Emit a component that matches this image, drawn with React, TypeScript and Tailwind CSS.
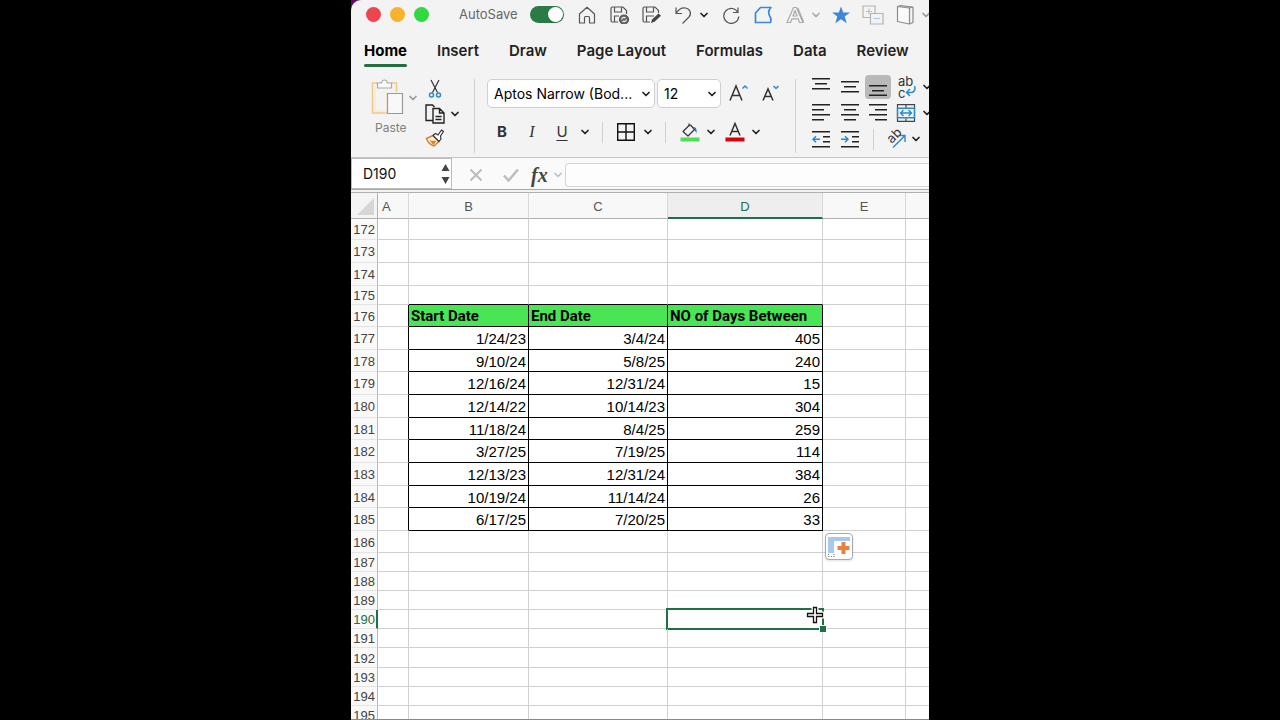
import React from "react";
import clsx from "clsx";

const tabs = ["Home", "Insert", "Draw", "Page Layout", "Formulas", "Data", "Review"];

type Row = { n: number; h: string; cells?: [string, string, string] };

const rows: Row[] = [
  { n: 172, h: "h-[21px]" },
  { n: 173, h: "h-[23px]" },
  { n: 174, h: "h-[23px]" },
  { n: 175, h: "h-[19px]" },
  { n: 176, h: "h-[22px]", cells: ["Start Date", "End Date", "NO of Days Between"] },
  { n: 177, h: "h-[23px]", cells: ["1/24/23", "3/4/24", "405"] },
  { n: 178, h: "h-[22px]", cells: ["9/10/24", "5/8/25", "240"] },
  { n: 179, h: "h-[23px]", cells: ["12/16/24", "12/31/24", "15"] },
  { n: 180, h: "h-[23px]", cells: ["12/14/22", "10/14/23", "304"] },
  { n: 181, h: "h-[22px]", cells: ["11/18/24", "8/4/25", "259"] },
  { n: 182, h: "h-[23px]", cells: ["3/27/25", "7/19/25", "114"] },
  { n: 183, h: "h-[23px]", cells: ["12/13/23", "12/31/24", "384"] },
  { n: 184, h: "h-[22px]", cells: ["10/19/24", "11/14/24", "26"] },
  { n: 185, h: "h-[23px]", cells: ["6/17/25", "7/20/25", "33"] },
  { n: 186, h: "h-[22px]" },
  { n: 187, h: "h-[19px]" },
  { n: 188, h: "h-[19px]" },
  { n: 189, h: "h-[19px]" },
  { n: 190, h: "h-[19px]" },
  { n: 191, h: "h-[19px]" },
  { n: 192, h: "h-[20px]" },
  { n: 193, h: "h-[19px]" },
  { n: 194, h: "h-[19px]" },
  { n: 195, h: "h-[19px]" },
];

const HEADER_ROW = 176;
const SELECTED_ROW = 190;

type IconProps = {
  w?: number;
  h?: number;
  className?: string;
  children: React.ReactNode;
};

const Icon = ({ w = 18, h = 18, className, children }: IconProps) => (
  <svg
    width={w}
    height={h}
    viewBox={`0 0 ${w} ${h}`}
    fill="none"
    stroke="currentColor"
    strokeWidth="1.2"
    className={clsx("shrink-0", className)}
    aria-hidden="true"
  >
    {children}
  </svg>
);

const Chevron = ({ className = "text-[#222]" }: { className?: string }) => (
  <Icon w={8} h={8} className={className}>
    <path d="M1 2.5l3 3 3-3" strokeWidth="1.7" strokeLinecap="round" strokeLinejoin="round" />
  </Icon>
);

const IconButton = ({
  label,
  className,
  children,
}: {
  label: string;
  className?: string;
  children: React.ReactNode;
}) => (
  <button aria-label={label} className={clsx("flex shrink-0 items-center justify-center", className)}>
    {children}
  </button>
);

const Lines = ({ d }: { d: string }) => (
  <Icon w={18} h={18} className="text-[#222]">
    <path d={d} strokeWidth="1.4" />
  </Icon>
);

const TitleBar = () => (
  <div className="flex h-[29px] items-center pl-[15px] text-[#555]">
    <div className="flex shrink-0 gap-[9px]">
      <button aria-label="Close" className="size-[15px] rounded-full bg-[#ee4550]" />
      <button aria-label="Minimize" className="size-[15px] rounded-full bg-[#f7b32e]" />
      <button aria-label="Zoom" className="size-[15px] rounded-full bg-[#30d940]" />
    </div>
    <label htmlFor="autosave" className="ml-[30px] w-[71px] shrink-0 text-[13px] text-[#666]">
      AutoSave
    </label>
    <span className="relative flex h-[17px] w-[34px] shrink-0 items-center rounded-full bg-[#2a7b45]">
      <input id="autosave" type="checkbox" defaultChecked className="peer absolute inset-0 opacity-0" />
      <span className="ml-[18px] size-[15px] rounded-full bg-white shadow-sm" />
    </span>

    <div className="ml-[14px] flex shrink-0 items-center gap-[14px]">
      <IconButton label="Home screen">
        <Icon>
          <path d="M1.5 8L9 1.3 16.5 8v9h-5v-5.5a1 1 0 0 0-1-1h-3a1 1 0 0 0-1 1V17h-5z" strokeLinejoin="round" />
        </Icon>
      </IconButton>
      <IconButton label="Save">
        <Icon w={20} className="-mr-0.5">
          <path d="M8 16H2.500a1.500 1.500 0 0 1-1.500-1.500v-12A1.500 1.500 0 0 1 2.500 1H13l3.500 3.500V8M4.500 1v5h7V1M4.500 16v-6H9" />
          <circle cx="14" cy="13.500" r="4.500" fill="#666" />
          <path d="M11.500 13.500a2.500 2.500 0 0 1 4-1.500m1 1.500a2.500 2.500 0 0 1-4 1.500" stroke="#f3f3f3" />
        </Icon>
      </IconButton>
      <IconButton label="Save as">
        <Icon w={20} className="-mr-0.5">
          <path d="M8 16H2.500a1.500 1.500 0 0 1-1.500-1.500v-12A1.500 1.500 0 0 1 2.500 1H13l3.500 3.500V7M4.500 1v5h7V1M4.500 16v-6H12" />
          <path d="M9 17l1-3.500L16.500 7.500l2.500 2.300-6.500 6z" fill="#444" stroke="none" />
        </Icon>
      </IconButton>
      <div className="flex items-center gap-2">
        <IconButton label="Undo">
          <Icon>
            <path d="M2 1.500v6h6M2 7.500C4.500 3.500 8 1.500 11.500 2c4.500.7 6.500 5.500 3.500 9L8.500 17.500" />
          </Icon>
        </IconButton>
        <IconButton label="Undo history">
          <Chevron />
        </IconButton>
      </div>
      <IconButton label="Redo">
        <Icon>
          <path d="M16 1.500v5h-5M16 6.500a7.500 7.500 0 1 0 .8 4" />
        </Icon>
      </IconButton>
      <IconButton label="Shapes" className="text-[#3c86dc]">
        <Icon>
          <path d="M6.500 1.500H17c-2.500 2.500-3 5-1.500 8 1.500 2.500 2 4.500 1 7H1.500V7z" strokeWidth="1.700" strokeLinejoin="round" />
        </Icon>
      </IconButton>
      <div className="flex items-center gap-2">
        <IconButton label="Text effects" className="text-[#aaa]">
          <Icon>
            <path d="M1 16.500L7.500 1.500h3L17 16.500h-3.500l-1.400-3.700H6L4.500 16.500zM7 10h4.200L9 4.500z" strokeLinejoin="round" />
            <path d="M11.500 2l6 14.500" strokeWidth="1.800" />
          </Icon>
        </IconButton>
        <IconButton label="More text effects">
          <Chevron className="text-[#aaa]" />
        </IconButton>
      </div>
      <IconButton label="Favorites" className="-ml-0.5 text-[#3c86dc]">
        <Icon>
          <path d="M9 .5l2.200 6H18l-5.300 4 2 6.700L9 13.200l-5.700 4 2-6.700L0 6.500h6.800z" fill="currentColor" stroke="none" />
        </Icon>
      </IconButton>
      <IconButton label="Group" className="-ml-0.5 text-[#b5b5b5]">
        <Icon w={22} h={20}>
          <path d="M8.500 12.500H1V1h12v7.500M8.500 8.500h12.500v10.500H8.500z" />
          <path d="M7 3.500v6M4 6.500h6M11.500 13.500h6.500" stroke="#a9c6e2" />
        </Icon>
      </IconButton>
      <div className="-ml-0.5 flex items-center gap-2">
        <IconButton label="Format" className="text-[#8c8c8c]">
          <Icon h={20}>
            <path d="M1.500 1.500l12 1.500v16l-12-2.500z" fill="#fafafa" strokeLinejoin="round" />
            <path d="M1.500 1.500l3-.8L17 2v15.500l-3.500 1.500M13.500 3L17 2" strokeLinejoin="round" />
          </Icon>
        </IconButton>
        <IconButton label="More formats">
          <Chevron className="text-[#999]" />
        </IconButton>
      </div>
    </div>
  </div>
);

const Tabs = () => (
  <nav className="flex h-[43px] gap-[30px] pt-[10px] pl-[13px] text-[15px] leading-[23px] font-semibold text-[#222]">
    {tabs.map((tab, i) => (
      <button
        key={tab}
        className={clsx(
          "flex h-[28px] shrink-0 flex-col justify-between whitespace-nowrap",
          i === 0 && "font-bold text-black"
        )}
      >
        {tab}
        {i === 0 && <span className="h-[3px] w-full rounded-full bg-[#1f6f3f]" />}
      </button>
    ))}
  </nav>
);

const ClipboardGroup = () => (
  <div className="flex h-[74px] shrink-0 border-r border-[#d0d0d0] pr-[15px]">
    <div className="w-[54px]">
      <div className="flex items-center gap-1">
        <IconButton label="Paste icon">
          <Icon w={34} h={38}>
            <path d="M7 4H1.500v30H16M20 4h5.500v9" stroke="#f0c88c" strokeWidth="1.500" />
            <path d="M4 7v25h12V13" stroke="#fbe6c6" />
            <path d="M6.500 9V4h4c.5-4 5.500-4 6 0h4v5z" fill="#fafafa" stroke="#aaa" />
            <path d="M16.500 14.500h15v20h-15z" fill="#f8f8f8" stroke="#999" />
          </Icon>
        </IconButton>
        <IconButton label="Paste options">
          <Chevron className="text-[#999]" />
        </IconButton>
      </div>
      <button className="ml-[4px] block text-[12px] leading-[22px] text-[#808080]">Paste</button>
    </div>
    <div className="flex flex-col gap-[5px]">
      <IconButton label="Cut" className="self-start">
        <Icon w={20} h={20} className="text-[#333]">
          <path d="M6 1l6.500 12.500M14 1L7.500 13.500" />
          <circle cx="6.500" cy="16" r="2" stroke="#2c8ac9" strokeWidth="1.500" />
          <circle cx="13.500" cy="16" r="2" stroke="#2c8ac9" strokeWidth="1.500" />
        </Icon>
      </IconButton>
      <div className="flex items-center gap-[6px]">
        <IconButton label="Copy">
          <Icon w={20} h={20} className="text-[#222]">
            <path d="M8 16.500H1V1h6.500l2 2M8 4.500h6.500l4.500 4.500v10H8zM14.500 4.500v4.500H19M10.500 12.500h6M10.500 15.500h6" strokeWidth="1.400" />
          </Icon>
        </IconButton>
        <IconButton label="Copy options">
          <Chevron />
        </IconButton>
      </div>
      <IconButton label="Format painter" className="self-start">
        <Icon w={20} h={18}>
          <path d="M1.500 9.500L8 6.500l6 6-5 4.500c-3.500-1-6-3.500-7.500-7.500z" fill="#fff4e6" stroke="#df7f2a" strokeWidth="1.500" />
          <path d="M4.500 11.500l7 .5-3 4z" fill="#df7f2a" stroke="none" />
          <path d="M8 6.500l2.500-2 2.500 1.500L16.500 1l2 1.500L15.500 7l.5 3-2 2.500z" fill="#fff" stroke="#333" strokeLinejoin="round" />
        </Icon>
      </IconButton>
    </div>
  </div>
);

const FontGroup = () => (
  <div className="flex h-[74px] shrink-0 flex-col border-r border-[#d0d0d0] pl-[12px]">
    <div className="flex items-center">
      <div className="relative">
        <select
          aria-label="Font"
          className="h-[29px] w-[168px] appearance-none rounded-[5px] border border-[#cfcfcf] bg-white pl-[6px] text-[14px] text-black"
        >
          <option>Aptos Narrow (Bod...</option>
        </select>
        <span className="pointer-events-none absolute top-[11px] right-[5px]">
          <Chevron />
        </span>
      </div>
      <div className="relative ml-[2px]">
        <select
          aria-label="Font size"
          className="h-[29px] w-[64px] appearance-none rounded-[5px] border border-[#cfcfcf] bg-white pl-[6px] text-[14px] text-black"
        >
          <option>12</option>
        </select>
        <span className="pointer-events-none absolute top-[11px] right-[5px]">
          <Chevron />
        </span>
      </div>
      <IconButton label="Increase font size" className="ml-[8px]">
        <Icon w={20} h={20} className="text-[#333]">
          <path d="M1 16.500L7 2l6 14.500M3 11.500h8" strokeWidth="1.500" />
          <path d="M13.500 4.500l2.500-2.500 2.500 2.500" stroke="#2c8ac9" strokeWidth="1.500" />
        </Icon>
      </IconButton>
      <IconButton label="Decrease font size" className="ml-[12px]">
        <Icon w={20} h={20} className="text-[#333]">
          <path d="M2 16.500L7 5l5 11.500M3.500 12.500h7" strokeWidth="1.500" />
          <path d="M12.500 2L15 4.500 17.500 2" stroke="#2c8ac9" strokeWidth="1.500" />
        </Icon>
      </IconButton>
    </div>
    <div className="mt-[12px] flex h-[24px] items-center text-[15px] text-[#333]">
      <button className="w-[30px] font-bold">B</button>
      <button className="w-[30px] text-[16px] italic [font-family:'Liberation_Serif',serif]">I</button>
      <button className="w-[30px] underline underline-offset-3">U</button>
      <IconButton label="Underline options" className="ml-[4px]">
        <Chevron />
      </IconButton>
      <span className="ml-[13px] h-[21px] w-px bg-[#d0d0d0]" />
      <IconButton label="Borders" className="ml-[14px]">
        <Icon className="text-[#111]">
          <path d="M.7.7h16.600v16.600H.7zM9 .7v16.600M.7 9h16.600" strokeWidth="1.400" />
        </Icon>
      </IconButton>
      <IconButton label="Border options" className="ml-[9px]">
        <Chevron />
      </IconButton>
      <span className="ml-[13px] h-[21px] w-px bg-[#d0d0d0]" />
      <IconButton label="Fill color" className="ml-[14px]">
        <Icon w={20} h={20} className="text-[#333]">
          <path d="M9 1.500v3M9 3.500L3 9.500l5 4.500 6.500-6.500-4-4.500z" strokeLinejoin="round" />
          <path d="M13 5c3 0 4 2 3.500 6.500C15.500 9 15 8.500 13.500 7.500z" fill="#2c6fa5" stroke="none" />
          <path d="M.5 15.500h19v4H.5z" fill="#4fdd53" stroke="none" />
        </Icon>
      </IconButton>
      <IconButton label="Fill options" className="ml-[7px]">
        <Chevron />
      </IconButton>
      <IconButton label="Font color" className="ml-[10px]">
        <Icon w={20} h={20} className="text-[#333]">
          <path d="M5 13.500L10 1.500l5 12M6.500 9.500h7" strokeWidth="1.500" />
          <path d="M.5 15.500h19v4H.5z" fill="#d8000c" stroke="none" />
        </Icon>
      </IconButton>
      <IconButton label="Font color options" className="ml-[7px]">
        <Chevron />
      </IconButton>
      <span className="w-[35px]" />
    </div>
  </div>
);

const AlignGroup = () => (
  <div className="-mt-[5px] flex shrink-0 flex-col pl-[12px]">
    <div className="flex h-[26px] items-center">
      <IconButton label="Top align" className="w-[26px]">
        <Lines d="M0 .7h18M3 5.700h12M0 10.700h18" />
      </IconButton>
      <IconButton label="Middle align" className="ml-[3px] w-[26px]">
        <Lines d="M0 3.700h18M3 8.700h12M0 13.700h18" />
      </IconButton>
      <IconButton label="Bottom align" className="ml-[2px] h-[24px] w-[26px] rounded-[4px] bg-[#b9b9b9]">
        <Lines d="M0 7.700h18M3 12.700h12M0 17.300h18" />
      </IconButton>
      <IconButton label="Wrap text" className="ml-[7px]">
        <span className="relative block h-[24px] w-[20px] text-left text-[13px] leading-[12px] text-[#333]">
          ab
          <br />c
          <span className="absolute right-[2px] bottom-[2px]">
            <Icon w={11} h={11} className="text-[#2c8ac9]">
              <path d="M9.500 0c1.500 4-1 6.500-3 6.500H1.500M5 3L1.500 6.500 5 10" strokeWidth="1.500" />
            </Icon>
          </span>
        </span>
      </IconButton>
      <IconButton label="Wrap options" className="ml-[5px]">
        <Chevron />
      </IconButton>
    </div>
    <div className="flex h-[26px] items-center">
      <IconButton label="Align left" className="w-[26px]">
        <Lines d="M0 .7h18M0 5.700h12M0 10.700h18M0 15.700h12" />
      </IconButton>
      <IconButton label="Align center" className="ml-[3px] w-[26px]">
        <Lines d="M0 .7h18M3 5.700h12M0 10.700h18M3 15.700h12" />
      </IconButton>
      <IconButton label="Align right" className="ml-[2px] w-[26px]">
        <Lines d="M0 .7h18M6 5.700h12M0 10.700h18M6 15.700h12" />
      </IconButton>
      <IconButton label="Merge" className="ml-[5px]">
        <Icon w={20} h={18} className="text-[#444]">
          <path d="M1.500.7h17v16.600h-17zM10 .7v3M10 14.300v3" />
          <path d="M1.500 4.200h17v9.600h-17zM4.500 9h11M7.500 6l-3 3 3 3M12.500 6l3 3-3 3" stroke="#2c8ac9" strokeWidth="1.400" />
        </Icon>
      </IconButton>
      <IconButton label="Merge options" className="ml-[7px]">
        <Chevron />
      </IconButton>
    </div>
    <div className="flex h-[26px] items-center">
      <IconButton label="Decrease indent" className="w-[26px]">
        <Icon className="text-[#222]">
          <path d="M0 1.700h18M11 6.700h7M11 11.700h7M0 16.700h18" strokeWidth="1.400" />
          <path d="M8 9.200H1M4 6.200l-3 3 3 3" stroke="#2c8ac9" strokeWidth="1.500" />
        </Icon>
      </IconButton>
      <IconButton label="Increase indent" className="ml-[3px] w-[26px]">
        <Icon className="text-[#222]">
          <path d="M0 1.700h18M11 6.700h7M11 11.700h7M0 16.700h18" strokeWidth="1.400" />
          <path d="M0 9.200h7M4 6.200l3 3-3 3" stroke="#2c8ac9" strokeWidth="1.500" />
        </Icon>
      </IconButton>
      <span className="ml-[10px] h-[21px] w-px bg-[#d0d0d0]" />
      <IconButton label="Orientation" className="ml-[12px]">
        <span className="relative block size-[20px]">
          <span className="absolute top-0 left-0 -rotate-45 text-[13px] leading-[12px] text-[#333]">ab</span>
          <Icon w={20} h={20} className="text-[#2c8ac9]">
            <path d="M7 18.500L18.500 7M12.500 6.500h6.500V13" strokeWidth="1.400" />
          </Icon>
        </span>
      </IconButton>
      <IconButton label="Orientation options" className="ml-[6px]">
        <Chevron />
      </IconButton>
    </div>
  </div>
);

const FormulaBar = () => (
  <div className="flex h-[32px] items-center border-b border-[#a8a8a8] bg-[#fafafa]">
    <div className="flex h-[31px] w-[101px] shrink-0 items-center border border-[#bdbdbd] bg-white">
      <input
        aria-label="Name box"
        defaultValue="D190"
        className="w-[89px] min-w-0 pl-[11px] text-[14px] text-[#111] outline-none"
      />
      <IconButton label="Change reference">
        <Icon w={9} h={20} className="text-[#444]">
          <path d="M4.500 0L8.500 7h-8zM4.500 20L.5 13h8z" fill="currentColor" stroke="none" />
        </Icon>
      </IconButton>
    </div>
    <div className="flex min-w-0 flex-1 items-center pt-[2px]">
      <IconButton label="Cancel" className="ml-[17px]">
        <Icon w={14} h={14} className="text-[#bdbdbd]">
          <path d="M1.500 1.500l11 11M12.500 1.500l-11 11" strokeWidth="2" />
        </Icon>
      </IconButton>
      <IconButton label="Enter" className="ml-[20px]">
        <Icon w={16} h={14} className="text-[#bdbdbd]">
          <path d="M1 7.500l4.500 5L15 1.500" strokeWidth="2.500" />
        </Icon>
      </IconButton>
      <button
        aria-label="Insert function"
        className="ml-[12px] w-[20px] shrink-0 text-left text-[20px] leading-[26px] font-bold text-[#444] italic [font-family:'Liberation_Serif',serif]"
      >
        fx
      </button>
      <IconButton label="Function options" className="ml-[3px]">
        <Chevron className="text-[#c0c0c0]" />
      </IconButton>
      <input
        aria-label="Formula"
        className="ml-[3px] h-[24px] min-w-0 flex-1 rounded-l-[4px] border border-r-0 border-[#d4d4d4] bg-[#fdfdfd] px-2 text-[14px] outline-none"
      />
    </div>
  </div>
);

const AutoFillButton = () => (
  <button
    aria-label="Auto fill options"
    className="absolute top-[2px] left-[2px] z-10 flex h-[27px] w-[28px] items-center justify-center rounded-[4px] border border-[#a9a9a9] bg-white shadow-sm"
  >
    <Icon w={22} h={22}>
      <path d="M0 1h22v4H6v12H0z" fill="#a9c8ee" stroke="none" />
      <path d="M.5 18v3M.5 20.500h6M6 18v3" stroke="#777" strokeWidth="1" strokeDasharray="1 1.500" />
      <path d="M13.500 6h4v4h4v4h-4v4h-4v-4h-4v-4h4z" fill="#e8813b" stroke="none" />
    </Icon>
  </button>
);

const Selection = () => (
  <>
    <span className="absolute -top-[2px] -right-[2px] -bottom-[2px] -left-[2px] border-2 border-[#1f7044]" />
    <span className="absolute -right-[5px] -bottom-[5px] z-10 size-[8px] border border-white bg-[#1f7044]" />
    <span className="absolute -top-[4px] -right-[2px] z-10">
      <Icon w={18} h={18}>
        <path d="M7 1.500h4V7h5.500v4H11v5.500H7V11H1.500V7H7z" stroke="#fff" strokeWidth="3" />
        <path d="M7.500 1.500h3v6h6v3h-6v6h-3v-6h-6v-3h6z" fill="#fff" stroke="#111" strokeWidth="1.300" />
      </Icon>
    </span>
  </>
);

const cols = ["A", "B", "C", "D", "E", ""];

const Sheet = () => (
  <table className="w-full table-fixed border-separate border-spacing-0 bg-white">
    <colgroup>
      <col className="w-[27px]" />
      <col className="w-[31px]" />
      <col className="w-[120px]" />
      <col className="w-[139px]" />
      <col className="w-[155px]" />
      <col className="w-[83px]" />
      <col />
    </colgroup>
    <thead>
      <tr className="h-[26px] text-[13px] leading-[18px] text-[#555]">
        <th className="border-r border-b border-[#b0b0b0] bg-[#f4f4f4] p-0">
          <Icon w={19} h={19} className="mt-[2px] ml-[5px]">
            <path d="M18 1v17H1z" fill="#d6d6d6" stroke="none" />
          </Icon>
        </th>
        {cols.map((c) => (
          <th
            key={c}
            scope="col"
            className={clsx(
              "border-b p-0 pt-[3px] font-normal",
              c !== "" && "border-r border-r-[#d8d8d8]",
              c === "A" && "pl-[4px] text-left",
              c === "D"
                ? "border-b-2 border-b-[#1f7044] bg-[#eeeeee] text-[#1f7044]"
                : "border-b-[#b0b0b0] bg-[#f8f8f8]"
            )}
          >
            {c}
          </th>
        ))}
      </tr>
    </thead>
    <tbody>
      {rows.map((row) => {
        const selected = row.n === SELECTED_ROW;
        const header = row.n === HEADER_ROW;
        return (
          <tr key={row.n} className={row.h}>
            <th
              scope="row"
              className={clsx(
                "border-r border-b border-b-[#e4e4e4] bg-[#f9f9f9] p-0 pt-[2px] pr-[2px] text-right text-[13px] leading-[16px] font-normal",
                selected ? "border-r-2 border-r-[#1f7044] pr-px text-[#1f7044]" : "border-r-[#b8b8b8] text-[#444]"
              )}
            >
              {row.n}
            </th>
            <td className={clsx("border-r border-b border-b-[#d0d0d0] p-0", row.cells ? "border-r-black" : "border-r-[#d0d0d0]")} />
            {[0, 1, 2].map((i) => (
              <td
                key={i}
                className={clsx(
                  "relative border-r border-b p-0 px-[2px] leading-[18px] text-black",
                  row.cells ? "border-r-black" : "border-r-[#d0d0d0]",
                  row.cells || row.n === HEADER_ROW - 1 ? "border-b-black" : "border-b-[#d0d0d0]",
                  header
                    ? "bg-[#4ae554] text-left text-[15px] font-bold [font-family:Roboto,sans-serif]"
                    : "pt-[2px] text-right text-[15px]"
                )}
              >
                {row.cells?.[i]}
                {selected && i === 2 && <Selection />}
              </td>
            ))}
            <td className="relative border-r border-b border-[#d0d0d0] p-0">
              {row.n === 186 && <AutoFillButton />}
            </td>
            <td className="border-b border-[#d0d0d0] p-0" />
          </tr>
        );
      })}
    </tbody>
  </table>
);

const App = () => {
  return (
    <div className="h-screen overflow-hidden bg-black [font-family:'Liberation_Sans',Arial,sans-serif]">
      <div className="mx-auto h-full w-full max-w-[578px] bg-[#5a1161]">
        <div className="flex h-full flex-col overflow-hidden rounded-tl-[10px] border-b border-[#8a8a8a] bg-[#f3f3f3]">
          <header className="shrink-0 border-b border-[#c4c4c4] [font-family:Inter,sans-serif]">
            <TitleBar />
            <Tabs />
            <div className="flex h-[85px] overflow-hidden pt-[7px] pl-[20px]">
              <ClipboardGroup />
              <FontGroup />
              <AlignGroup />
            </div>
          </header>
          <div className="shrink-0 [font-family:Inter,sans-serif]">
            <FormulaBar />
          </div>
          <main className="mt-[2px] min-h-0 flex-1 overflow-hidden border-t border-[#b0b0b0]">
            <Sheet />
          </main>
        </div>
      </div>
    </div>
  );
};

export default App;
